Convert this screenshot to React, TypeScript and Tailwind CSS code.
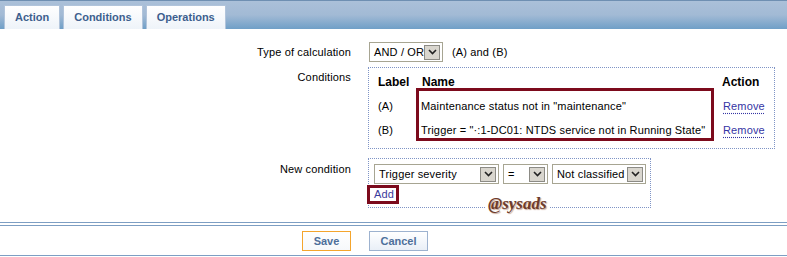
function Arrow() {
  return (
    <span className="w-[16px] h-[15px] border border-[#8c8b85] bg-[#d9d6ce] flex items-center justify-center shrink-0">
      <svg width="9" height="6" viewBox="0 0 9 6">
        <path d="M1 1l3.5 3.5L8 1" stroke="#222" strokeWidth="1.6" fill="none" />
      </svg>
    </span>
  );
}

function FakeSelect({ value, className }: { value: string; className: string }) {
  return (
    <div className={`${className} h-[20px] flex items-center border border-[#a7a592] bg-white pl-[4px] pr-[2px]`}>
      <span className="flex-1 whitespace-nowrap">{value}</span>
      <Arrow />
    </div>
  );
}

const tab =
  "h-[24px] px-[10px] flex items-center border border-b-0 border-[#b1c4db] bg-gradient-to-b from-[#ffffff] to-[#eef3f9] font-bold text-[#3d5f8e]";

export default function App() {
  return (
    <div className="w-[787px] h-[257px] overflow-hidden bg-white font-['Liberation_Sans',Arial,sans-serif] text-[11px] text-black">
      <div className="h-[29px] border-t border-[#6f8fb2] bg-gradient-to-b from-[#abc0d9] via-[#a2bad5] to-[#6f9fc7] flex items-end gap-[3px] pl-[4px]">
        <div className={tab}>Action</div>
        <div className={`${tab} from-[#f3f7fb] to-[#e3ebf4]`}>Conditions</div>
        <div className={tab}>Operations</div>
      </div>

      <div className="grid grid-cols-[351px_1fr] gap-x-[17px] pt-[13px] tracking-[0.15px]">
        <div className="text-right leading-[14px] self-center">Type of calculation</div>
        <div className="flex items-center gap-[9px] ml-[1px]">
          <FakeSelect value="AND / OR" className="w-[74px]" />
          <span>(A) and (B)</span>
        </div>

        <div className="text-right leading-[14px] pt-[8px]">Conditions</div>
        <div className="mt-[5px] w-[407px] border border-dotted border-[#7f94c6] pl-[9px] pr-[9px] pt-[8px] pb-[7px]">
          <div className="flex font-bold text-[12px] leading-[12px] tracking-normal">
            <div className="w-[38px]">Label</div>
            <div className="w-[306px] pl-[6px]">Name</div>
            <div>Action</div>
          </div>
          <div className="flex">
            <div className="w-[38px] pt-[11px] flex flex-col gap-[10px] leading-[14px]">
              <div>(A)</div>
              <div>(B)</div>
            </div>
            <div className="w-[298px] h-[53px] border-[3px] border-[#7c0a1c] pl-[2px] pt-[8px] flex flex-col gap-[10px] leading-[14px] whitespace-nowrap">
              <div>Maintenance status not in "maintenance"</div>
              <div>Trigger = "&#183;:1-DC01: NTDS service not in Running State"</div>
            </div>
            <div className="ml-[9px] pt-[11px] flex flex-col gap-[10px] leading-[14px] text-[#3434a4]">
              <span className="underline decoration-dotted underline-offset-[3px]">Remove</span>
              <span className="underline decoration-dotted underline-offset-[3px]">Remove</span>
            </div>
          </div>
        </div>

        <div className="text-right leading-[14px] pt-[13px]">New condition</div>
        <div className="relative mt-[9px] w-[283px] h-[50px] border border-dotted border-[#7f94c6] pt-[5px]">
          <div className="flex gap-[4px] ml-[5px]">
            <FakeSelect value="Trigger severity" className="w-[125px]" />
            <FakeSelect value="=" className="w-[45px]" />
            <FakeSelect value="Not classified" className="w-[94px]" />
          </div>
          <div className="ml-[-2px] mt-[1px] w-[32px] h-[19px] border-[3px] border-[#7c0a1c] pl-[4px] leading-[13px] text-[#3a3a9c]">
            Add
          </div>
          <div className="absolute left-[116px] top-[34px] bg-white px-[3px] font-['Liberation_Serif',serif] italic font-bold text-[17px] leading-[22px] tracking-normal text-[#6e3b2b] [text-shadow:1px_1px_1px_#c8a898]">
            @sysads
          </div>
        </div>
      </div>

      <div className="mt-[14px] h-[1px] bg-[#7d9ec3]" />
      <div className="mt-[2px] h-[1px] bg-[#7d9ec3]" />

      <div className="grid grid-cols-[351px_1fr] gap-x-[17px] mt-[5px]">
        <div className="flex justify-end">
          <div className="w-[49px] h-[20px] border border-[#f4a52d] bg-gradient-to-b from-white to-[#f6f8fb] flex items-center justify-center font-bold text-[#4d6f9a]">
            Save
          </div>
        </div>
        <div className="ml-[1px] w-[59px] h-[20px] border border-[#9db2cf] bg-gradient-to-b from-white to-[#e9eff7] flex items-center justify-center font-bold text-[#4d6f9a]">
          Cancel
        </div>
      </div>
      <div className="mt-[4px] h-[1px] bg-[#7d9ec3]" />
    </div>
  );
}
